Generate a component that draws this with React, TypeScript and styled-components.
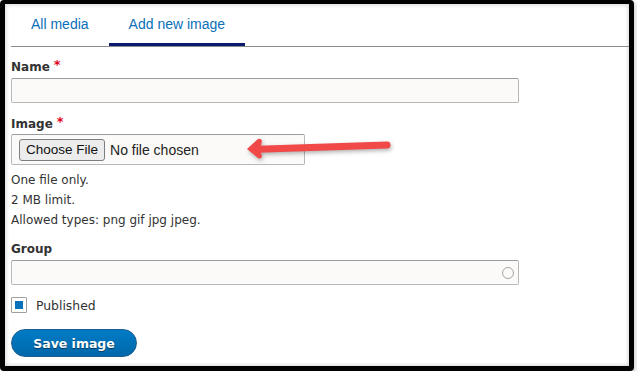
import React from 'react';
import styled, { createGlobalStyle } from 'styled-components';

const GlobalStyle = createGlobalStyle`
  html, body {
    margin: 0;
    padding: 0;
    background: #ffffff;
  }
  body {
    font-family: "DejaVu Sans", Verdana, sans-serif;
    color: #333333;
  }
`;

const Frame = styled.div`
  position: relative;
  box-sizing: border-box;
  width: 634px;
  height: 371px;
  border: 5px solid #000000;
  border-top-width: 4px;
  border-radius: 4px;
  padding-left: 6px;
  background: #ffffff;
  box-shadow: inset 0 0 5px rgba(0, 0, 0, 0.22), 2px 2px 4px rgba(0, 0, 0, 0.18);
`;

const Tabs = styled.nav`
  display: flex;
  height: 42px;
  border-bottom: 1px solid #8c8c8c;
`;

const Tab = styled.a<{ $active?: boolean }>`
  box-sizing: border-box;
  display: flex;
  align-items: center;
  height: 42px;
  padding: 1px 20px 0;
  font-family: "Liberation Sans", Arial, sans-serif;
  font-size: 14px;
  color: #0a70b8;
  text-decoration: none;
  border-bottom: 3px solid ${({ $active }) => ($active ? '#0b1a6e' : 'transparent')};
`;

const Form = styled.form`
  display: flex;
  flex-direction: column;
  padding-top: 12px;
`;

const Field = styled.div<{ $after: number }>`
  display: flex;
  flex-direction: column;
  align-items: flex-start;
  margin-bottom: ${({ $after }) => $after}px;
`;

const Label = styled.label`
  font-size: 12px;
  line-height: 16px;
  font-weight: bold;
  color: #333333;
  margin-bottom: 3px;
`;

const Required = styled.span`
  color: #e0001b;
  margin-left: 4px;
  font-size: 13px;
  line-height: 0;
  vertical-align: 2px;
`;

const TextBox = styled.div<{ $width: number }>`
  position: relative;
  box-sizing: border-box;
  width: ${({ $width }) => $width}px;
  height: 25px;
  background: #fbfaf8;
  border: 1px solid #b8b8b8;
  border-top-color: #9c9c9c;
  border-radius: 2px;
`;

const Throbber = styled.span`
  position: absolute;
  right: 4px;
  top: 6px;
  box-sizing: border-box;
  width: 12px;
  height: 12px;
  border: 1.6px solid #a3a3a3;
  border-radius: 50%;
`;

const FileBox = styled.div`
  box-sizing: border-box;
  display: flex;
  align-items: center;
  gap: 5px;
  width: 294px;
  height: 31px;
  margin-top: -1px;
  padding-left: 7px;
  background: #fbfaf8;
  border: 1px solid #b8b8b8;
  border-top-color: #9c9c9c;
  border-radius: 2px;
  font-family: "Liberation Sans", Arial, sans-serif;
  font-size: 14px;
  color: #222222;
`;

const FileButton = styled.span`
  box-sizing: border-box;
  display: flex;
  align-items: center;
  height: 22px;
  padding: 0 6px;
  background: #ececec;
  border: 1px solid #7e7e7e;
  border-radius: 3px;
  font-size: 13.5px;
  color: #111111;
`;

const Help = styled.div`
  margin-top: 5px;
  font-size: 12px;
  line-height: 20px;
  color: #333333;
`;

const CheckRow = styled.label`
  display: flex;
  align-items: center;
  gap: 9px;
  height: 16px;
  font-size: 12.4px;
  color: #333333;
  margin-bottom: 16px;
`;

const CheckBox = styled.span`
  box-sizing: border-box;
  display: flex;
  align-items: center;
  justify-content: center;
  width: 16px;
  height: 16px;
  background: #ffffff;
  border: 1px solid #a0a0a0;
  border-radius: 1px;
`;

const CheckMark = styled.span`
  width: 8px;
  height: 8px;
  background: #0a72bb;
`;

const SaveButton = styled.button`
  box-sizing: border-box;
  width: 126px;
  height: 28px;
  padding: 0;
  border: 1px solid #1e5c90;
  border-radius: 20em;
  background: linear-gradient(to bottom, #007bc6, #0068aa);
  color: #ffffff;
  font-family: "DejaVu Sans", Verdana, sans-serif;
  font-size: 12.5px;
  font-weight: bold;
  text-shadow: 0 1px 1px rgba(0, 0, 0, 0.5);
`;

const ArrowSvg = styled.svg`
  position: absolute;
  left: 233px;
  top: 130px;
  overflow: visible;
  filter: drop-shadow(1px 2px 2px rgba(0, 0, 0, 0.3));
`;

const Arrow = () => (
  <ArrowSvg width="160" height="30" viewBox="0 0 160 30">
    <path d="M20 15.2 L149 11" stroke="#f14848" strokeWidth="7" strokeLinecap="round" fill="none" />
    <path d="M9 15 L20 5 Q23 4 24 7 L22 15 L24 22.5 Q23 25.5 20 24 Z" fill="#f14848" />
  </ArrowSvg>
);

export default function App() {
  return (
    <>
      <GlobalStyle />
      <Frame>
        <Tabs>
          <Tab href="#">All media</Tab>
          <Tab href="#" $active>
            Add new image
          </Tab>
        </Tabs>
        <Form>
          <Field $after={13}>
            <Label>
              Name<Required>*</Required>
            </Label>
            <TextBox $width={508} />
          </Field>
          <Field $after={11}>
            <Label>
              Image<Required>*</Required>
            </Label>
            <FileBox>
              <FileButton>Choose File</FileButton>
              <span>No file chosen</span>
            </FileBox>
            <Help>
              One file only.
              <br />
              2 MB limit.
              <br />
              Allowed types: png gif jpg jpeg.
            </Help>
          </Field>
          <Field $after={12}>
            <Label>Group</Label>
            <TextBox $width={508}>
              <Throbber />
            </TextBox>
          </Field>
          <CheckRow>
            <CheckBox>
              <CheckMark />
            </CheckBox>
            Published
          </CheckRow>
          <div>
            <SaveButton type="button">Save image</SaveButton>
          </div>
        </Form>
        <Arrow />
      </Frame>
    </>
  );
}
